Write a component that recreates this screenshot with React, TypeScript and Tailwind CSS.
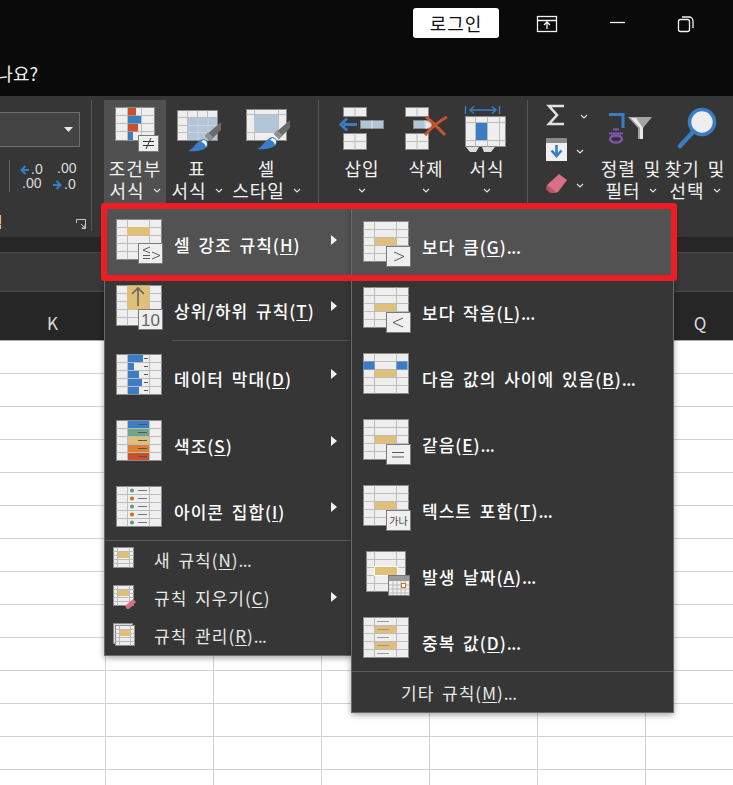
import React from "react";

const OUT = "#8a8a8a";
const LINE = "#bcbcbc";
const FILL = "#eeeeee";
const BLUE = "#3a7dc4";

function Tbl({ x = 0.5, y = 0.5, w = 45, h = 40, cols = [11, 33], rows = [8, 16, 24, 32], stroke = OUT, fill = FILL, line = LINE }: { x?: number; y?: number; w?: number; h?: number; cols?: number[]; rows?: number[]; stroke?: string; fill?: string; line?: string }) {
  return (
    <g>
      <rect x={x} y={y} width={w} height={h} fill={fill} stroke={stroke} />
      {cols.map((c) => (
        <line key={"c" + c} x1={x + c} x2={x + c} y1={y} y2={y + h} stroke={line} />
      ))}
      {rows.map((r) => (
        <line key={"r" + r} x1={x} x2={x + w} y1={y + r} y2={y + r} stroke={line} />
      ))}
    </g>
  );
}

function Badge({ x, y, w = 24, h = 20, children }: { x: number; y: number; w?: number; h?: number; children?: React.ReactNode }) {
  return (
    <g>
      <rect x={x} y={y} width={w} height={h} fill="#efefef" stroke="#7a7a7a" />
      {children}
    </g>
  );
}

function Icon({ children }: { children: React.ReactNode }) {
  return (
    <svg width="48" height="46" viewBox="0 0 48 46" className="block overflow-visible shrink-0">
      {children}
    </svg>
  );
}

const G = "#e0bf78";
const D = "#5a5a5a";

const iconHighlight = (
  <Icon>
    <Tbl />
    <rect x="11" y="8" width="23" height="8.5" fill={G} />
    <Badge x={22.5} y={24.5}>
      <path d="M34 28l-7 3 7 3M27 36.5h7M27 39.5h7M36 33l8 3.5-8 3.5" fill="none" stroke={D} />
    </Badge>
  </Icon>
);
const iconTop = (
  <Icon>
    <Tbl />
    <rect x="11.5" y="0.5" width="22" height="24" fill={G} />
    <path d="M22 21V3M16 9l6-6 6 6" fill="none" stroke="#666" strokeWidth="1.6" />
    <Badge x={22.5} y={24.5}>
      <text x="34.5" y="41" textAnchor="middle" fontSize="17" fill="#666" fontFamily="Liberation Sans, sans-serif">10</text>
    </Badge>
  </Icon>
);
const iconBars = (
  <Icon>
    <Tbl />
    {[[0, 15], [8, 6], [16, 11], [24, 14], [32, 11]].map(([y, w]) => (
      <g key={y}>
        <rect x="12" y={y + 1} width={w} height="7" fill={BLUE} />
        <line x1="28" x2="32" y1={y + 4.5} y2={y + 4.5} stroke="#555" />
      </g>
    ))}
  </Icon>
);
const iconScale = (
  <Icon>
    <Tbl />
    {["#3a7dc4", "#6ea68b", "#e0bf78", "#dd7f30", "#cc4f2b"].map((c, i) => (
      <g key={c}>
        <rect x="12" y={i * 8 + 1} width="21" height="7" fill={c} />
        <line x1="22" x2="31" y1={i * 8 + 4.5} y2={i * 8 + 4.5} stroke="#555" />
      </g>
    ))}
  </Icon>
);
const iconSets = (
  <Icon>
    <Tbl />
    {["#5a9a7a", "#d9691e", "#5a9a7a", "#d9691e", "#5a9a7a"].map((c, i) => (
      <g key={i}>
        <circle cx="16" cy={i * 8 + 4.5} r="2" fill={c} />
        <line x1="22" x2="31" y1={i * 8 + 4.5} y2={i * 8 + 4.5} stroke="#777" />
      </g>
    ))}
  </Icon>
);

function RTbl({ children, gold = true }: { children?: React.ReactNode; gold?: boolean }) {
  return (
    <Icon>
      <Tbl />
      {gold && <rect x="12" y="17" width="21" height="7" fill={G} />}
      {children}
    </Icon>
  );
}

const rGreater = (
  <RTbl>
    <Badge x={23.5} y={25.5}>
      <path d="M31 31l10 4.500-10 4.500" fill="none" stroke={D} />
    </Badge>
  </RTbl>
);
const rLess = (
  <RTbl>
    <Badge x={23.5} y={25.5}>
      <path d="M40 31l-10 4.500 10 4.500" fill="none" stroke={D} />
    </Badge>
  </RTbl>
);
const rBetween = (
  <Icon>
    <Tbl />
    <rect x="0.5" y="8.500" width="11" height="8" fill={BLUE} />
    <rect x="33.500" y="8.500" width="11" height="8" fill={BLUE} />
    <rect x="12" y="17" width="21" height="7" fill={G} />
  </Icon>
);
const rEqual = (
  <RTbl>
    <Badge x={23.5} y={25.5}>
      <path d="M29 33.500h12M29 38h12" fill="none" stroke={D} />
    </Badge>
  </RTbl>
);
const rText = (
  <RTbl>
    <Badge x={23.5} y={25.5}>
      <text x="35.500" y="40" textAnchor="middle" fontSize="10" fill="#444" fontFamily="Noto Sans CJK KR, sans-serif">가나</text>
    </Badge>
  </RTbl>
);
const rDate = (
  <Icon>
    <Tbl x={3.5} y={0.5} w={39} h={40} cols={[8, 30]} rows={[8, 16, 24, 32]} />
    <rect x="11.500" y="15.500" width="23" height="9" fill={G} stroke="#fff" />
    <rect x="25.500" y="24.500" width="21" height="20" fill="#efefef" stroke="#7a7a7a" />
    <rect x="26" y="25" width="20" height="5" fill="#9a9a9a" />
    <path d="M26 34h20M26 38h20M26 42h20M30 30v14M34 30v14M38 30v14M42 30v14" stroke="#bbb" fill="none" />
    <rect x="38.500" y="32.500" width="4" height="4" fill="#fff" stroke="#d9691e" />
  </Icon>
);
const rDup = (
  <Icon>
    <Tbl />
    <rect x="12" y="9" width="21" height="7" fill={G} />
    <rect x="12" y="25" width="21" height="7" fill={G} />
    {[4.5, 12.5, 20.5, 28.5, 36.5].map((y) => (
      <line key={y} x1="14" x2="26" y1={y} y2={y} stroke="#999" />
    ))}
  </Icon>
);

function SmallIcon({ children }: { children: React.ReactNode }) {
  return (
    <svg width="24" height="24" viewBox="0 0 24 24" className="block overflow-visible shrink-0">
      {children}
    </svg>
  );
}
const sNew = (
  <SmallIcon>
    <Tbl w={20} h={20} cols={[4, 16]} rows={[4, 8, 12, 16]} />
    <rect x="5" y="5" width="11" height="6" fill={G} />
  </SmallIcon>
);
const sClear = (
  <SmallIcon>
    <Tbl w={20} h={20} cols={[4, 16]} rows={[4, 8, 12, 16]} />
    <rect x="5" y="5" width="11" height="6" fill={G} />
    <path d="M12 21l8-7 3 3-7 7h-2z" fill="#d96f85" />
  </SmallIcon>
);
const sManage = (
  <SmallIcon>
    <rect x="0.500" y="0.500" width="19" height="20" fill="#ddd" stroke={OUT} />
    <Tbl x={2.5} y={2.5} w={19} h={20} cols={[4, 15]} rows={[4, 8, 12, 16]} />
    <rect x="7" y="7" width="11" height="6" fill={G} />
  </SmallIcon>
);

function Arrow() {
  return (
    <svg width="6" height="10" viewBox="0 0 6 10" className="block">
      <path d="M0 0l6 5-6 5z" fill="#f2f2f2" />
    </svg>
  );
}

function Chev({ className = "" }: { className?: string }) {
  return (
    <svg width="8" height="5" viewBox="0 0 8 5" className={"inline-block " + className}>
      <path d="M1 1l3 3 3-3" fill="none" stroke="#e6e6e6" strokeWidth="1.100" />
    </svg>
  );
}

function Label({ first, second, chev = true }: { first: string; second: string; chev?: boolean }) {
  return (
    <div className="flex flex-col items-center text-[18px] leading-[22px] tracking-[1px] [word-spacing:3px] text-[#f0f0f0] whitespace-nowrap">
      <div className="h-[22px]">{first}</div>
      <div className="h-[22px] flex items-center gap-[8px]">
        {second && <span>{second}</span>}
        {chev && <Chev />}
      </div>
    </div>
  );
}

function RibbonBtn({ w, active, icon, first, second }: { w: string; active?: boolean; icon: React.ReactNode; first: string; second: string }) {
  return (
    <div className={w + " shrink-0 h-[103px] flex flex-col items-center " + (active ? "bg-[#505050]" : "")}>
      <div className="h-[57px] w-full">{icon}</div>
      <Label first={first} second={second} />
    </div>
  );
}

function Sep() {
  return <div className="w-px h-[131px] bg-[#565656] shrink-0" />;
}

function Brush() {
  return (
    <g>
      <path d="M44 12v8L33 31l-5-5z" fill="#6a6a6a" />
      <path d="M31 22l5 5-3 4-5-5z" fill="#8f8f8f" />
      <path d="M11 41c6-2 8-10 15-12 4 0 6 4 4 8-4 4-14 5-19 4z" fill={BLUE} />
      <path d="M26 30c4 0 5 4 3 7-1-3-2-4-5-5z" fill="#f2f2f2" />
    </g>
  );
}

const rbCF = (
  <svg width="62" height="57" viewBox="0 0 62 57" className="block overflow-visible">
    <Tbl x={11.5} y={7.5} w={39} h={33} cols={[12, 26]} rows={[8, 16, 24]} />
    <rect x="24" y="8" width="8" height="7.500" fill="#cc4f2b" />
    <rect x="24" y="16" width="13" height="7.500" fill={BLUE} />
    <rect x="24" y="24" width="10" height="7.500" fill="#cc4f2b" />
    <rect x="24" y="32" width="5" height="8" fill={BLUE} />
    <Badge x={34.5} y={35.5} w={20} h={16}>
      <path d="M39 41.500h11M39 45.500h11M47 38l-5 11" stroke="#333" fill="none" />
    </Badge>
  </svg>
);
const rbTable = (
  <svg width="62" height="57" viewBox="0 0 62 57" className="block overflow-visible">
    <g transform="translate(11 10)">
      <Tbl x={0.5} y={0.5} w={40} h={30} cols={[10, 20, 30]} rows={[7, 15, 22]} />
      <rect x="11" y="8" width="29" height="22" fill="#b3c6d8" />
      <path d="M21 8v22M31 8v22M11 15.500h29M11 22.500h29" stroke="#c8d3dd" />
      <Brush />
    </g>
  </svg>
);
const rbStyle = (
  <svg width="77" height="57" viewBox="0 0 77 57" className="block overflow-visible">
    <g transform="translate(18 9)">
      <Tbl x={0.5} y={0.5} w={40} h={31} cols={[8, 32]} rows={[5, 23]} />
      <rect x="8" y="6" width="24" height="18" fill="#b3c6d8" />
      <g transform="translate(0 -1)">
        <Brush />
      </g>
    </g>
  </svg>
);
const rbInsert = (
  <svg width="60" height="57" viewBox="0 0 60 57" className="block overflow-visible">
    <g transform="translate(-1 0)">
      <Tbl x={12.5} y={7.5} w={23} h={9} cols={[11.5]} rows={[]} />
      <path d="M26 24.500H13M16 18.500l-6 6 6 6" fill="none" stroke={BLUE} strokeWidth="3" />
      <rect x="29.500" y="20.500" width="23" height="8" fill="#b3c6d8" stroke={OUT} />
      <path d="M41 20.500v8" stroke="#e6e6e6" />
      <Tbl x={12.5} y={33.5} w={23} h={16} cols={[11.5]} rows={[8]} />
    </g>
  </svg>
);
const rbDelete = (
  <svg width="60" height="57" viewBox="0 0 60 57" className="block overflow-visible">
    <Tbl x={9.5} y={7.5} w={23} h={9} cols={[11.5]} rows={[]} />
    <rect x="17.500" y="20.500" width="18" height="8" fill="#b3c6d8" stroke={OUT} />
    <path d="M29 20.500v8" stroke="#e6e6e6" />
    <path d="M30 21l6 4-6 4z" fill="#e8e8e8" />
    <Tbl x={9.5} y={33.500} w={23} h={16} cols={[11.5]} rows={[8]} />
    <path d="M30 17c6 4 12 11 19 18M51 17c-8 4-16 11-22 18" fill="none" stroke="#c9532e" strokeWidth="3" />
  </svg>
);
const rbFormat = (
  <svg width="60" height="57" viewBox="0 0 60 57" className="block overflow-visible">
    <path d="M8.500 6v8M42.500 6v8M13 10h26M17 6.500l-4 3.500 4 3.500M35 6.500l4 3.500-4 3.500" fill="none" stroke={BLUE} strokeWidth="1.500" />
    <Tbl x={8.5} y={16.5} w={40} h={30} cols={[10, 22, 34]} rows={[6, 24]} />
    <rect x="19" y="23" width="11" height="17" fill={BLUE} />
    <path d="M9 47h13l-3 5h-6zM25 47h13l-4 5h-7z" fill="#ddd" />
  </svg>
);
const rbStack = (
  <svg width="60" height="100" viewBox="0 0 60 100" className="block overflow-visible">
    <path d="M26 6H11l8 9-8 9h15" fill="none" stroke="#e2e2e2" strokeWidth="2.600" />
    <g>
      <rect x="8" y="38" width="21" height="23" fill="#f0f0f0" />
      <rect x="8" y="38" width="21" height="5" fill="#8a8a8a" />
      <path d="M18.500 45v10M13.500 50.500l5 5.500 5-5.500" fill="none" stroke={BLUE} strokeWidth="2.600" />
    </g>
    <path d="M21 74l8 6-9 12-3 1-8-6v-2z" fill="#d96f85" />
    <path d="M9 85l8 6-1 2h-4l-4-4z" fill="#b7546b" />
    <g transform="translate(42 14)"><path d="M1 1l3 3 3-3" fill="none" stroke="#e6e6e6" strokeWidth="1.100" /></g>
    <g transform="translate(38 49)"><path d="M1 1l3 3 3-3" fill="none" stroke="#e6e6e6" strokeWidth="1.100" /></g>
    <g transform="translate(38 83)"><path d="M1 1l3 3 3-3" fill="none" stroke="#e6e6e6" strokeWidth="1.100" /></g>
  </svg>
);
const rbSort = (
  <svg width="62" height="57" viewBox="0 0 62 57" className="block overflow-visible">
    <path d="M9 14.500h14V28" fill="none" stroke={BLUE} strokeWidth="3" />
    <path d="M13 29.500h6M9 33.500h14" fill="none" stroke="#8254ad" strokeWidth="2" />
    <ellipse cx="16" cy="39" rx="6" ry="3.500" fill="none" stroke="#8254ad" strokeWidth="2.400" />
    <path d="M28 17h24l-9 11v11h-5V28z" fill="#a4a4a4" />
    <path d="M31 18l9 10v11h3V28l-7-10z" fill="#e8e8e8" />
  </svg>
);
const rbFind = (
  <svg width="66" height="57" viewBox="0 0 66 57" className="block overflow-visible">
    <circle cx="40" cy="22" r="12.500" fill="#eeeeee" stroke={BLUE} strokeWidth="3.600" />
    <path d="M31 32L18 46" stroke={BLUE} strokeWidth="4.500" strokeLinecap="round" />
  </svg>
);

function Und({ c }: { c: string }) {
  return <span className="underline underline-offset-2">{c}</span>;
}

function Tail({ t }: { t?: string }) {
  return t ? <span className="tracking-[-0.5px]">{t}</span> : null;
}

function MenuRow({ top, icon, iconTop: it, textTop, arrowTop, text, k, tail, hi, indent }: { top?: string; icon: React.ReactNode; iconTop: string; textTop: string; arrowTop?: string; text: string; k: string; tail?: string; hi?: boolean; indent: string }) {
  return (
    <div className={"h-[66px] flex items-start " + (hi ? "bg-[#525252] " : "") + (top ?? "")}>
      <div className={indent + " shrink-0 " + it}>{icon}</div>
      <div className={"flex-1 whitespace-nowrap text-[17px] leading-[22px] font-medium text-white tracking-[1px] [word-spacing:3px] " + textTop}>
        {text}(<Und c={k} />)<Tail t={tail} />
      </div>
      {arrowTop && <div className={"w-[21px] shrink-0 " + arrowTop}><Arrow /></div>}
    </div>
  );
}

function SmallRow({ icon, text, k, tail, arrow }: { icon: React.ReactNode; text: string; k: string; tail?: string; arrow?: boolean }) {
  return (
    <div className="h-[38px] flex items-center pl-[8px]">
      <div className="w-[41px] shrink-0 -mt-[2px]">{icon}</div>
      <div className="flex-1 whitespace-nowrap text-[17px] leading-[22px] text-[#e8e8e8] tracking-[1px] [word-spacing:3px]">
        {text}(<Und c={k} />)<Tail t={tail} />
      </div>
      {arrow && <div className="w-[21px] shrink-0 -mt-[2px]"><Arrow /></div>}
    </div>
  );
}

const rightRows: { icon: React.ReactNode; text: string; k: string; hi?: boolean }[] = [
  { icon: rGreater, text: "보다 큼", k: "G", hi: true },
  { icon: rLess, text: "보다 작음", k: "L" },
  { icon: rBetween, text: "다음 값의 사이에 있음", k: "B" },
  { icon: rEqual, text: "같음", k: "E" },
  { icon: rText, text: "텍스트 포함", k: "T" },
  { icon: rDate, text: "발생 날짜", k: "A" },
  { icon: rDup, text: "중복 값", k: "D" },
];

export default function App() {
  return (
    <div className="relative w-[733px] h-[785px] overflow-hidden bg-white font-['Noto_Sans_CJK_KR','Noto_Sans',sans-serif]">
      {/* title bar */}
      <div className="h-[96px] bg-[#0a0a0a] flex flex-col">
        <div className="h-[47px] flex items-start justify-end pt-[8px]">
          <div className="w-[86px] h-[30px] bg-white rounded-[3px] text-[18px] leading-[30px] text-center text-[#111] mr-[234px] tracking-[1px]">로그인</div>
        </div>
        <div className="w-[38px] h-[38px] overflow-hidden flex justify-end whitespace-nowrap text-[#f0f0f0] text-[18px] leading-[52px]">
          <span className="shrink-0">어떤 작업을 원하시나요?</span>
        </div>
        <svg width="160" height="20" viewBox="0 0 160 20" className="absolute left-[535px] top-[14px] overflow-visible">
          <rect x="2.500" y="2.500" width="19" height="15" fill="none" stroke="#f2f2f2" strokeWidth="1.300" />
          <path d="M2.500 6.500h19M12 15V9M9 11l3-3 3 3" fill="none" stroke="#f2f2f2" strokeWidth="1.300" />
          <path d="M75 8.500h15" stroke="#f2f2f2" strokeWidth="1.300" />
          <rect x="143.500" y="5.500" width="11" height="12" rx="2" fill="none" stroke="#f2f2f2" strokeWidth="1.300" />
          <path d="M147 3h7a4 4 0 0 1 4 4v7" fill="none" stroke="#f2f2f2" strokeWidth="1.300" />
        </svg>
      </div>

      {/* ribbon */}
      <div className="h-[141px] bg-[#363636] pt-[4px] flex items-start">
        <div className="w-[91px] shrink-0 h-[133px] flex flex-col relative overflow-hidden">
          <div className="w-[80px] h-[35px] mt-[12px] bg-[#434343] border border-l-0 border-[#6e6e6e] flex items-center justify-end pr-[6px]">
            <svg width="9" height="5" viewBox="0 0 9 5"><path d="M0 0h9L4.500 5z" fill="#e8e8e8" /></svg>
          </div>
          <div className="flex mt-[13px] ml-[9px]">
            <div className="w-px h-[32px] bg-[#666]" />
            <div className="ml-[10px] grid grid-cols-[37px_24px] text-[14px] leading-[13px] text-[#dcdcdc] font-['Liberation_Sans',sans-serif] mt-[2px]">
              <div className="flex items-center gap-[2px]">
                <svg width="9" height="10" viewBox="0 0 9 10"><path d="M9 5H2M5.500 1L1.500 5l4 4" fill="none" stroke={BLUE} strokeWidth="2" /></svg>
                <span>.0</span>
              </div>
              <div>.00</div>
              <div className="pl-[2px]">.00</div>
              <div className="flex items-center gap-[2px] -ml-[4px]">
                <svg width="9" height="10" viewBox="0 0 9 10"><path d="M0 5h7M3.500 1l4 4-4 4" fill="none" stroke={BLUE} strokeWidth="2" /></svg>
                <span>.0</span>
              </div>
            </div>
          </div>
          <div className="flex items-center justify-between mt-[23px] h-[14px] pr-[5px]">
            <div className="w-[3px] overflow-hidden flex justify-end text-[17px] leading-[14px] text-[#e8e8e8]">
              <span className="shrink-0">식</span>
            </div>
            <svg width="10" height="10" viewBox="0 0 10 10" className="mt-[4px]"><path d="M.5 4V.5h9v9H6M5 5l4 4M9 5.500V9H5.500" fill="none" stroke="#c8c8c8" /></svg>
          </div>
        </div>
        <Sep />
        <div className="w-[12px] shrink-0" />
        <RibbonBtn w="w-[62px]" active icon={rbCF} first="조건부" second="서식" />
        <RibbonBtn w="w-[62px]" icon={rbTable} first="표" second="서식" />
        <RibbonBtn w="w-[77px]" icon={rbStyle} first="셀" second="스타일" />
        <div className="w-[13px] shrink-0" />
        <Sep />
        <div className="w-[13px] shrink-0" />
        <RibbonBtn w="w-[60px]" icon={rbInsert} first="삽입" second="" />
        <div className="w-[4px] shrink-0" />
        <RibbonBtn w="w-[60px]" icon={rbDelete} first="삭제" second="" />
        <div className="w-[1px] shrink-0" />
        <RibbonBtn w="w-[60px]" icon={rbFormat} first="서식" second="" />
        <div className="w-[10px] shrink-0" />
        <Sep />
        <div className="w-[10px] shrink-0 " />
        <div className="w-[60px] shrink-0 h-[100px]">{rbStack}</div>
        <div className="w-[2px] shrink-0" />
        <RibbonBtn w="w-[62px]" icon={rbSort} first="정렬 및" second="필터" />
        <RibbonBtn w="w-[66px]" icon={rbFind} first="찾기 및" second="선택" />
      </div>

      {/* formula area */}
      <div className="h-[15px] bg-[#262626]" />
      <div className="h-[40px] bg-[#383838] border-t border-b border-[#4a4a4a]" />
      {/* column header */}
      <div className="h-[49px] bg-[#262626] border-b border-[#a8a8a8] flex text-[17px] leading-[22px] text-[#dcdcdc]">
        <div className="w-[105px] text-center pt-[20px]">K</div>
        <div className="flex-1" />
        <div className="w-[56px] text-center pt-[20px] mr-[5px]">Q</div>
      </div>
      {/* sheet */}
      <div className="flex flex-col">
        {Array.from({ length: 14 }, (_, i) => (
          <div key={i} className="h-[33px] flex shrink-0 border-b border-[#d2d2d2]">
            <div className="w-[106px] border-r border-[#d2d2d2] shrink-0" />
            {[0, 1, 2, 3, 4].map((c) => (
              <div key={c} className="w-[108px] border-r border-[#d2d2d2] shrink-0" />
            ))}
          </div>
        ))}
      </div>

      {/* left menu */}
      <div className="absolute left-[104px] top-[207px] w-[249px] h-[449px] bg-[#363636] border border-[#6a6a6a] shadow-[0_2px_6px_rgba(0,0,0,0.35)] pt-[1px]">
        <MenuRow hi indent="pl-[11px] w-[69px]" icon={iconHighlight} iconTop="mt-[10px]" textTop="mt-[25px]" arrowTop="mt-[26px]" text="셀 강조 규칙" k="H" />
        <MenuRow indent="pl-[11px] w-[69px]" icon={iconTop} iconTop="mt-[10px]" textTop="mt-[25px]" arrowTop="mt-[26px]" text="상위/하위 규칙" k="T" />
        <div className="h-px -mt-px ml-[67px] bg-[#525252]" />
        <MenuRow indent="pl-[11px] w-[69px]" icon={iconBars} iconTop="mt-[13px]" textTop="mt-[27px]" arrowTop="mt-[28px]" text="데이터 막대" k="D" />
        <MenuRow indent="pl-[11px] w-[69px]" icon={iconScale} iconTop="mt-[13px]" textTop="mt-[28px]" arrowTop="mt-[29px]" text="색조" k="S" />
        <MenuRow indent="pl-[11px] w-[69px]" icon={iconSets} iconTop="mt-[13px]" textTop="mt-[28px]" arrowTop="mt-[29px]" text="아이콘 집합" k="I" />
        <div className="h-px bg-[#5a5a5a] mt-[1px]" />
        <SmallRow icon={sNew} text="새 규칙" k="N" tail="..." />
        <SmallRow icon={sClear} text="규칙 지우기" k="C" arrow />
        <SmallRow icon={sManage} text="규칙 관리" k="R" tail="..." />
      </div>

      {/* right menu */}
      <div className="absolute left-[351px] top-[207px] w-[323px] h-[506px] bg-[#363636] border border-[#6a6a6a] shadow-[0_2px_6px_rgba(0,0,0,0.35)] pt-[1px]">
        {rightRows.map((r) => (
          <MenuRow key={r.text} hi={r.hi} indent="pl-[11px] w-[70px]" icon={r.icon} iconTop="mt-[12px]" textTop="mt-[27px]" text={r.text} k={r.k} tail="..." />
        ))}
        <div className="h-px bg-[#5a5a5a]" />
        <div className="h-[41px] flex items-center pl-[49px] text-[17px] leading-[22px] text-[#e8e8e8] tracking-[1px] [word-spacing:3px] whitespace-nowrap">
          기타 규칙(<Und c="M" />)<Tail t="..." />
        </div>
      </div>

      {/* red highlight */}
      <div className="absolute left-[101px] top-[203px] w-[576px] h-[78px] border-[6px] border-[#ee1c25] rounded-[3px]" />
    </div>
  );
}
